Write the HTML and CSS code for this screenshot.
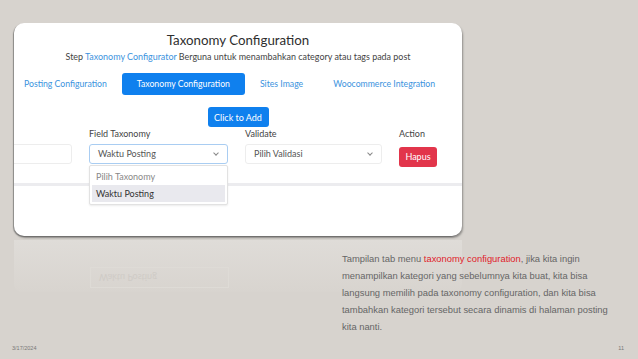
FILE: index.html
```html
<!DOCTYPE html>
<html>
<head>
    <title>Taxonomy Configuration</title>
    <link rel="stylesheet" href="styles.css">
</head>
<body>
    <div class="slide">
        <div class="shot">
            <div class="card">
                <h2 class="card-title">Taxonomy Configuration</h2>
                <p class="card-sub">Step <span class="link">Taxonomy Configurator</span> Berguna untuk menambahkan category atau tags pada post</p>
                <ul class="tabs">
                    <li>Posting Configuration</li>
                    <li class="active">Taxonomy Configuration</li>
                    <li>Sites Image</li>
                    <li>Woocommerce Integration</li>
                </ul>
                <div class="add-row">
                    <button type="button" class="btn btn-blue">Click to Add</button>
                </div>
                <div class="form-row">
                    <div class="col">
                        <div class="label">&nbsp;</div>
                        <div class="input"></div>
                    </div>
                    <div class="col col-drop">
                        <div class="label">Field Taxonomy</div>
                        <div class="input select focus">Waktu Posting <span class="caret"></span></div>
                        <ul class="dropdown">
                            <li class="muted">Pilih Taxonomy</li>
                            <li class="hover">Waktu Posting</li>
                        </ul>
                    </div>
                    <div class="col">
                        <div class="label">Validate</div>
                        <div class="input select">Pilih Validasi <span class="caret"></span></div>
                    </div>
                    <div class="col">
                        <div class="label">Action</div>
                        <button type="button" class="btn btn-red">Hapus</button>
                    </div>
                </div>
                <div class="row-line"></div>
            </div>
            <div class="reflection">
                <div class="ghost">Waktu Posting</div>
            </div>
        </div>

        <div class="notes">
            <p>Tampilan tab menu <span class="red">taxonomy configuration</span>, jika kita ingin
            menampilkan kategori yang sebelumnya kita buat, kita bisa
            langsung memilih pada taxonomy configuration, dan kita bisa
            tambahkan kategori tersebut secara dinamis di halaman posting
            kita nanti.</p>
        </div>

        <div class="footer">
            <span>3/17/2024</span>
            <span>11</span>
        </div>
    </div>
</body>
</html>
```

FILE: styles.css
```css
body {
  margin: 0;
  background-color: #d7d3ce;
  font-family: Lato, sans-serif;
}

.slide {
  width: 638px;
  height: 359px;
  position: relative;
  overflow: hidden;
}

.shot {
  position: absolute;
  left: 14px;
  top: 23px;
  width: 448px;
}

.card {
  height: 213px;
  background: #fff;
  border-radius: 10px;
  box-shadow: -1px 1px 1px rgba(80, 80, 80, 0.55), 1px 2px 2px rgba(60, 60, 60, 0.45);
  overflow: hidden;
  position: relative;
}

.card-title {
  margin: 0;
  padding-top: 7px;
  font-weight: normal;
  font-size: 13.3px;
  line-height: 20px;
  text-align: center;
  color: #2e2e2e;
}

.card-sub {
  margin: 0;
  font-size: 8.95px;
  line-height: 14px;
  text-align: center;
  color: #444;
}

.link {
  color: #3b93de;
}

.tabs {
  list-style: none;
  display: flex;
  margin: 9px 0 0 -5px;
  padding: 0;
}

.tabs li {
  padding: 0 15px;
  height: 22px;
  line-height: 22px;
  font-size: 8.7px;
  white-space: nowrap;
  color: #3b93de;
  border-radius: 3px;
}

.tabs li.active {
  background: #0f80ee;
  color: #fff;
}

.add-row {
  display: flex;
  justify-content: center;
  margin-top: 12px;
}

.btn {
  border: none;
  border-radius: 3px;
  font-family: inherit;
  font-size: 9px;
  color: #fff;
  height: 20px;
  padding: 0;
  white-space: nowrap;
}

.btn-blue {
  background: #0f80ee;
  width: 61px;
}

.btn-red {
  background: #e2354b;
  width: 38px;
}

.form-row {
  display: grid;
  grid-template-columns: 140px 139px 137px 40px;
  column-gap: 17px;
  margin-left: -82px;
  margin-top: 0;
}

.col {
  position: relative;
}

.label {
  font-size: 9px;
  line-height: 14px;
  height: 14px;
  color: #444;
  margin-bottom: 3px;
}

.input {
  height: 20px;
  box-sizing: border-box;
  border: 1px solid #ededed;
  border-radius: 3px;
  font-size: 9px;
  line-height: 18px;
  padding-left: 8px;
  color: #555;
  position: relative;
}

.input.focus {
  border-color: #a9cdf2;
}

.caret {
  position: absolute;
  right: 9px;
  top: 6px;
  width: 3px;
  height: 3px;
  border-right: 1px solid #888;
  border-bottom: 1px solid #888;
  transform: rotate(45deg);
}

.dropdown {
  position: absolute;
  left: 0;
  top: 38px;
  width: 139px;
  box-sizing: border-box;
  margin: 0;
  padding: 2px 2px;
  list-style: none;
  background: #fff;
  border: 1px solid #e2e2e2;
  border-radius: 2px;
  box-shadow: 0 1px 2px rgba(0, 0, 0, 0.08);
  z-index: 2;
}

.dropdown li {
  font-size: 9px;
  line-height: 17px;
  padding-left: 4px;
  color: #333;
}

.dropdown li.muted {
  color: #888;
}

.dropdown li.hover {
  background: #e9e9ee;
}

.row-line {
  margin-top: 16px;
  height: 3px;
  background: #ececef;
}

.reflection {
  height: 52px;
  margin-top: 4px;
  background: linear-gradient(#dfdcd8, #d8d4cf);
  border-radius: 0 0 8px 8px;
  position: relative;
}

.ghost {
  position: absolute;
  left: 76px;
  top: 27px;
  width: 139px;
  height: 21px;
  box-sizing: border-box;
  border: 1px solid #dedbd6;
  font-size: 9px;
  line-height: 19px;
  padding-left: 8px;
  color: #cfcbc6;
  transform: scaleY(-1);
}

.notes {
  position: absolute;
  left: 342px;
  top: 250px;
  width: 280px;
}

.notes p {
  margin: 0;
  font-family: "Liberation Sans", Arial, sans-serif;
  font-size: 9.4px;
  line-height: 17px;
  color: #666;
}

.red {
  color: #e0222b;
}

.footer {
  position: absolute;
  left: 12px;
  right: 14px;
  bottom: 8px;
  display: flex;
  justify-content: space-between;
  font-family: "Liberation Sans", Arial, sans-serif;
  font-size: 5.5px;
  color: #777;
}
```
